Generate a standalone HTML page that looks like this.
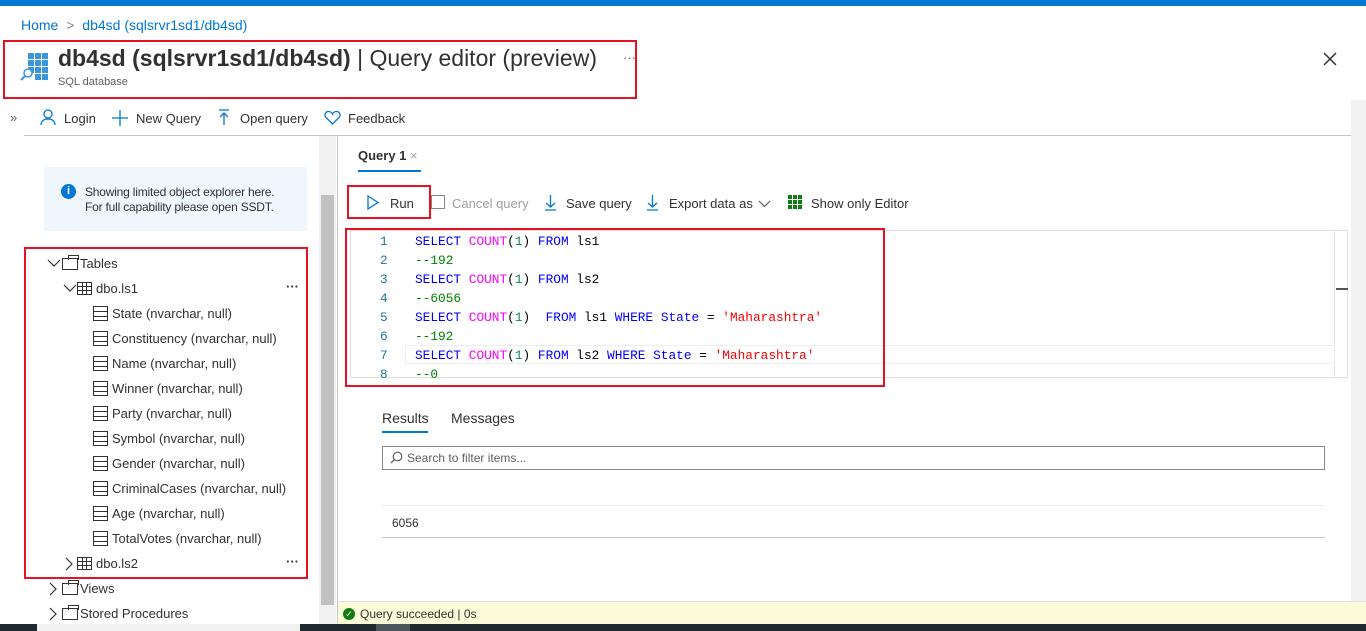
<!DOCTYPE html>
<html><head><meta charset="utf-8"><style>
*{margin:0;padding:0;box-sizing:border-box}
body{width:1366px;height:631px;overflow:hidden;background:#fff;font-family:"Liberation Sans",sans-serif;color:#323130;position:relative;font-size:13px}
.a{position:absolute;white-space:nowrap}
.red{position:absolute;border:2px solid #e81123}
.mono{font-family:"Liberation Mono",monospace;font-size:12.8px}
.kw{color:#0000ff}.fn{color:#ff00ff}.num{color:#098658}.cm{color:#008000}.st{color:#ff0000}
.col{position:absolute;left:93px;width:15px;height:15px;border:1px solid #323130}
.col:before,.col:after{content:"";position:absolute;left:0;right:0;height:1px;background:#323130}
.col:before{top:4px}.col:after{top:9px}
.fold{position:absolute;width:16px;height:12px;border:1px solid #323130}
.fold:before{content:"";position:absolute;left:5px;top:-4px;width:9px;height:4px;border:1px solid #323130;border-bottom:none}
.tbl{position:absolute;width:15px;height:13px;border:1px solid #323130;background:linear-gradient(#323130,#323130) 0 3px/100% 1px no-repeat,linear-gradient(#323130,#323130) 0 7px/100% 1px no-repeat,linear-gradient(#323130,#323130) 4px 0/1px 100% no-repeat,linear-gradient(#323130,#323130) 8px 0/1px 100% no-repeat}
.chev{position:absolute;font-size:13px;color:#323130}
</style></head><body>
<div class="a" style="left:0;top:0;width:1366px;height:6px;background:#0078d4"></div>
<div class="a" style="left:21px;top:17px;font-size:14px;color:#0078d4">Home <span style="color:#888;margin:0 4px">&gt;</span> db4sd (sqlsrvr1sd1/db4sd)</div>
<div class="red" style="left:3px;top:40px;width:634px;height:59px"></div>
<svg class="a" style="left:18px;top:50px" width="32" height="32" viewBox="0 0 32 32">
<g fill="#3a96dd"><rect x="10" y="3" width="6" height="6"/><rect x="17" y="3" width="6" height="6"/><rect x="24" y="3" width="6" height="6"/><rect x="10" y="10" width="6" height="6"/><rect x="17" y="10" width="6" height="6"/><rect x="24" y="10" width="6" height="6"/><rect x="10" y="17" width="6" height="6"/><rect x="17" y="17" width="6" height="6"/><rect x="24" y="17" width="6" height="6"/><rect x="17" y="24" width="6" height="6"/><rect x="24" y="24" width="6" height="6"/></g>
<circle cx="10" cy="23" r="4" fill="#fff" stroke="#3a96dd" stroke-width="1.5"/><line x1="7" y1="26" x2="3" y2="30" stroke="#3a96dd" stroke-width="2"/></svg>
<div class="a" style="left:58px;top:45px;font-size:23px;color:#323130"><b style="font-weight:600">db4sd (sqlsrvr1sd1/db4sd)</b> | Query editor (preview)</div>
<div class="a" style="left:58px;top:76px;font-size:11px;color:#605e5c">SQL database</div>
<div class="a" style="left:623px;top:50px;color:#605e5c">···</div>
<svg class="a" style="left:1323px;top:52px" width="14" height="14"><path d="M1 1L13 13M13 1L1 13" stroke="#323130" stroke-width="1.5"/></svg>
<div class="a" style="left:10px;top:110px;color:#605e5c">»</div>
<svg class="a" style="left:40px;top:109px" width="16" height="17"><circle cx="8" cy="5" r="4" fill="none" stroke="#0078d4" stroke-width="1.3"/><path d="M1 16c0-4 3-6 7-6s7 2 7 6" fill="none" stroke="#0078d4" stroke-width="1.3"/></svg>
<div class="a" style="left:64px;top:111px">Login</div>
<svg class="a" style="left:112px;top:110px" width="16" height="16"><path d="M8 0V16M0 8H16" stroke="#0078d4" stroke-width="1.3"/></svg>
<div class="a" style="left:136px;top:111px">New Query</div>
<svg class="a" style="left:218px;top:109px" width="12" height="17"><path d="M1 1H11M6 4V16M2 8L6 4L10 8" fill="none" stroke="#0078d4" stroke-width="1.3"/></svg>
<div class="a" style="left:240px;top:111px">Open query</div>
<svg class="a" style="left:324px;top:110px" width="17" height="15"><path d="M8.5 14L2 7.5C0 5.5 1 1.5 4.5 1.5C6.5 1.5 8 3 8.5 4C9 3 10.5 1.5 12.5 1.5C16 1.5 17 5.5 15 7.5Z" fill="none" stroke="#0078d4" stroke-width="1.3"/></svg>
<div class="a" style="left:348px;top:111px">Feedback</div>
<div class="a" style="left:24px;top:135px;width:1330px;height:1px;background:#c8c6c4"></div>
<div class="a" style="left:319px;top:136px;width:17px;height:488px;background:#f1f1f1"></div>
<div class="a" style="left:321px;top:195px;width:13px;height:410px;background:#c1c1c1"></div>
<div class="a" style="left:337px;top:136px;width:1px;height:488px;background:#c8c6c4"></div>
<div class="a" style="left:44px;top:167px;width:263px;height:64px;background:#eff6fc"></div>
<div class="a" style="left:61px;top:184px;width:15px;height:15px;border-radius:50%;background:#0078d4;color:#fff;font-size:11px;font-weight:bold;text-align:center;line-height:15px">i</div>
<div class="a" style="left:85px;top:185px;font-size:12px;line-height:15px;letter-spacing:-0.2px">Showing limited object explorer here.<br>For full capability please open SSDT.</div>
<div class="red" style="left:24px;top:247px;width:284px;height:332px"></div>
<svg class="a" style="left:47px;top:259px" width="14" height="8"><path d="M1 1L7 7L13 1" fill="none" stroke="#323130" stroke-width="1.2"/></svg>
<div class="fold" style="left:62px;top:258px"></div><div class="a" style="left:80px;top:256px">Tables</div>
<svg class="a" style="left:63px;top:284px" width="14" height="8"><path d="M1 1L7 7L13 1" fill="none" stroke="#323130" stroke-width="1.2"/></svg>
<div class="tbl" style="left:77px;top:282px"></div><div class="a" style="left:96px;top:281px">dbo.ls1</div>
<div class="a" style="left:286px;top:279px;font-weight:bold">···</div>
<div class="col" style="top:306px"></div><div class="a" style="left:112px;top:306px">State (nvarchar, null)</div>
<div class="col" style="top:331px"></div><div class="a" style="left:112px;top:331px">Constituency (nvarchar, null)</div>
<div class="col" style="top:356px"></div><div class="a" style="left:112px;top:356px">Name (nvarchar, null)</div>
<div class="col" style="top:381px"></div><div class="a" style="left:112px;top:381px">Winner (nvarchar, null)</div>
<div class="col" style="top:406px"></div><div class="a" style="left:112px;top:406px">Party (nvarchar, null)</div>
<div class="col" style="top:431px"></div><div class="a" style="left:112px;top:431px">Symbol (nvarchar, null)</div>
<div class="col" style="top:456px"></div><div class="a" style="left:112px;top:456px">Gender (nvarchar, null)</div>
<div class="col" style="top:481px"></div><div class="a" style="left:112px;top:481px">CriminalCases (nvarchar, null)</div>
<div class="col" style="top:506px"></div><div class="a" style="left:112px;top:506px">Age (nvarchar, null)</div>
<div class="col" style="top:531px"></div><div class="a" style="left:112px;top:531px">TotalVotes (nvarchar, null)</div>
<svg class="a" style="left:65px;top:557px" width="8" height="14"><path d="M1 1L7 7L1 13" fill="none" stroke="#323130" stroke-width="1.2"/></svg>
<div class="tbl" style="left:77px;top:557px"></div><div class="a" style="left:96px;top:556px">dbo.ls2</div>
<div class="a" style="left:286px;top:554px;font-weight:bold">···</div>
<svg class="a" style="left:49px;top:582px" width="8" height="14"><path d="M1 1L7 7L1 13" fill="none" stroke="#323130" stroke-width="1.2"/></svg>
<div class="fold" style="left:62px;top:583px"></div><div class="a" style="left:80px;top:581px">Views</div>
<svg class="a" style="left:49px;top:607px" width="8" height="14"><path d="M1 1L7 7L1 13" fill="none" stroke="#323130" stroke-width="1.2"/></svg>
<div class="fold" style="left:62px;top:608px"></div><div class="a" style="left:80px;top:606px">Stored Procedures</div>
<div class="a" style="left:358px;top:148px;font-size:13px;font-weight:600">Query 1 <span style="color:#a19f9d;font-weight:normal">×</span></div>
<div class="a" style="left:358px;top:170px;width:63px;height:2px;background:#0078d4"></div>
<div class="red" style="left:347px;top:185px;width:84px;height:34px"></div>
<svg class="a" style="left:367px;top:195px" width="12" height="15"><path d="M1 1L11 7.5L1 14Z" fill="none" stroke="#0078d4" stroke-width="1.3"/></svg>
<div class="a" style="left:390px;top:196px">Run</div>
<div class="a" style="left:431px;top:195px;width:14px;height:14px;border:1px solid #8a8886"></div>
<div class="a" style="left:452px;top:196px;color:#a19f9d">Cancel query</div>
<svg class="a" style="left:544px;top:194px" width="13" height="17"><path d="M6.5 1V13M2 9L6.5 13L11 9M1 16H12" fill="none" stroke="#0078d4" stroke-width="1.3"/></svg>
<div class="a" style="left:566px;top:196px">Save query</div>
<svg class="a" style="left:646px;top:194px" width="13" height="17"><path d="M6.5 1V13M2 9L6.5 13L11 9M1 16H12" fill="none" stroke="#0078d4" stroke-width="1.3"/></svg>
<div class="a" style="left:669px;top:196px">Export data as</div>
<svg class="a" style="left:758px;top:200px" width="13" height="8"><path d="M1 1L6.5 6.5L12 1" fill="none" stroke="#605e5c" stroke-width="1.2"/></svg>
<svg class="a" style="left:788px;top:195px" width="14" height="14"><g fill="#107c10"><rect x="0" y="0" width="4" height="4"/><rect x="5" y="0" width="4" height="4"/><rect x="10" y="0" width="4" height="4"/><rect x="0" y="5" width="4" height="4"/><rect x="5" y="5" width="4" height="4"/><rect x="10" y="5" width="4" height="4"/><rect x="0" y="10" width="4" height="4"/><rect x="5" y="10" width="4" height="4"/><rect x="10" y="10" width="4" height="4"/></g></svg>
<div class="a" style="left:811px;top:196px">Show only Editor</div>
<div class="a" style="left:350px;top:230px;width:998px;height:148px;border:1px solid #e1dfdd"></div>
<div class="a" style="left:1334px;top:231px;width:14px;height:146px;border-left:1px solid #e1dfdd"></div>
<div class="a" style="left:1336px;top:288px;width:12px;height:2px;background:#555"></div>
<div class="a" style="left:405px;top:345px;width:930px;height:19px;border:1px solid #eee"></div>
<div class="red" style="left:345px;top:228px;width:540px;height:159px"></div>
<div class="a mono" style="left:380px;top:232px;line-height:19px;color:#237893;overflow:hidden;height:146px">1<br>2<br>3<br>4<br>5<br>6<br>7<br>8</div>
<div class="a mono" style="left:415px;top:232px;line-height:19px;color:#000;overflow:hidden;height:146px">
<span class="kw">SELECT</span> <span class="fn">COUNT</span>(<span class="num">1</span>) <span class="kw">FROM</span> ls1<br>
<span class="cm">--192</span><br>
<span class="kw">SELECT</span> <span class="fn">COUNT</span>(<span class="num">1</span>) <span class="kw">FROM</span> ls2<br>
<span class="cm">--6056</span><br>
<span class="kw">SELECT</span> <span class="fn">COUNT</span>(<span class="num">1</span>)&nbsp; <span class="kw">FROM</span> ls1 <span class="kw">WHERE</span> <span class="kw">State</span> = <span class="st">'Maharashtra'</span><br>
<span class="cm">--192</span><br>
<span class="kw">SELECT</span> <span class="fn">COUNT</span>(<span class="num">1</span>) <span class="kw">FROM</span> ls2 <span class="kw">WHERE</span> <span class="kw">State</span> = <span class="st">'Maharashtra'</span><br>
<span class="cm">--0</span></div>
<div class="a" style="left:382px;top:410px;font-size:14px">Results</div>
<div class="a" style="left:382px;top:431px;width:46px;height:2px;background:#0078d4"></div>
<div class="a" style="left:451px;top:410px;font-size:14px">Messages</div>
<div class="a" style="left:382px;top:446px;width:943px;height:24px;border:1px solid #8a8886"></div>
<svg class="a" style="left:390px;top:451px" width="13" height="13"><circle cx="7.5" cy="5.5" r="4.3" fill="none" stroke="#605e5c" stroke-width="1.2"/><path d="M4.5 8.5L1 12" stroke="#605e5c" stroke-width="1.3"/></svg>
<div class="a" style="left:407px;top:451px;font-size:12px;color:#605e5c">Search to filter items...</div>
<div class="a" style="left:382px;top:505px;width:943px;height:1px;background:#edebe9"></div>
<div class="a" style="left:392px;top:516px;font-size:12px">6056</div>
<div class="a" style="left:382px;top:537px;width:943px;height:1px;background:#c8c6c4"></div>
<div class="a" style="left:338px;top:601px;width:1028px;height:23px;background:#fbfbd9;border-top:1px solid #e1dfdd"></div>
<div class="a" style="left:343px;top:608px;width:12px;height:12px;border-radius:50%;background:#107c10;color:#fff;font-size:9px;text-align:center;line-height:12px">✓</div>
<div class="a" style="left:360px;top:607px;font-size:12px">Query succeeded | 0s</div>
<div class="a" style="left:1351px;top:100px;width:15px;height:501px;background:#f1f1f1"></div>
<div class="a" style="left:0;top:624px;width:1366px;height:7px;background:#1f2a30"></div>
<div class="a" style="left:37px;top:624px;width:263px;height:7px;background:#f1f1f1"></div>
<div class="a" style="left:376px;top:624px;width:34px;height:7px;background:#4a555c"></div>
</body></html>
